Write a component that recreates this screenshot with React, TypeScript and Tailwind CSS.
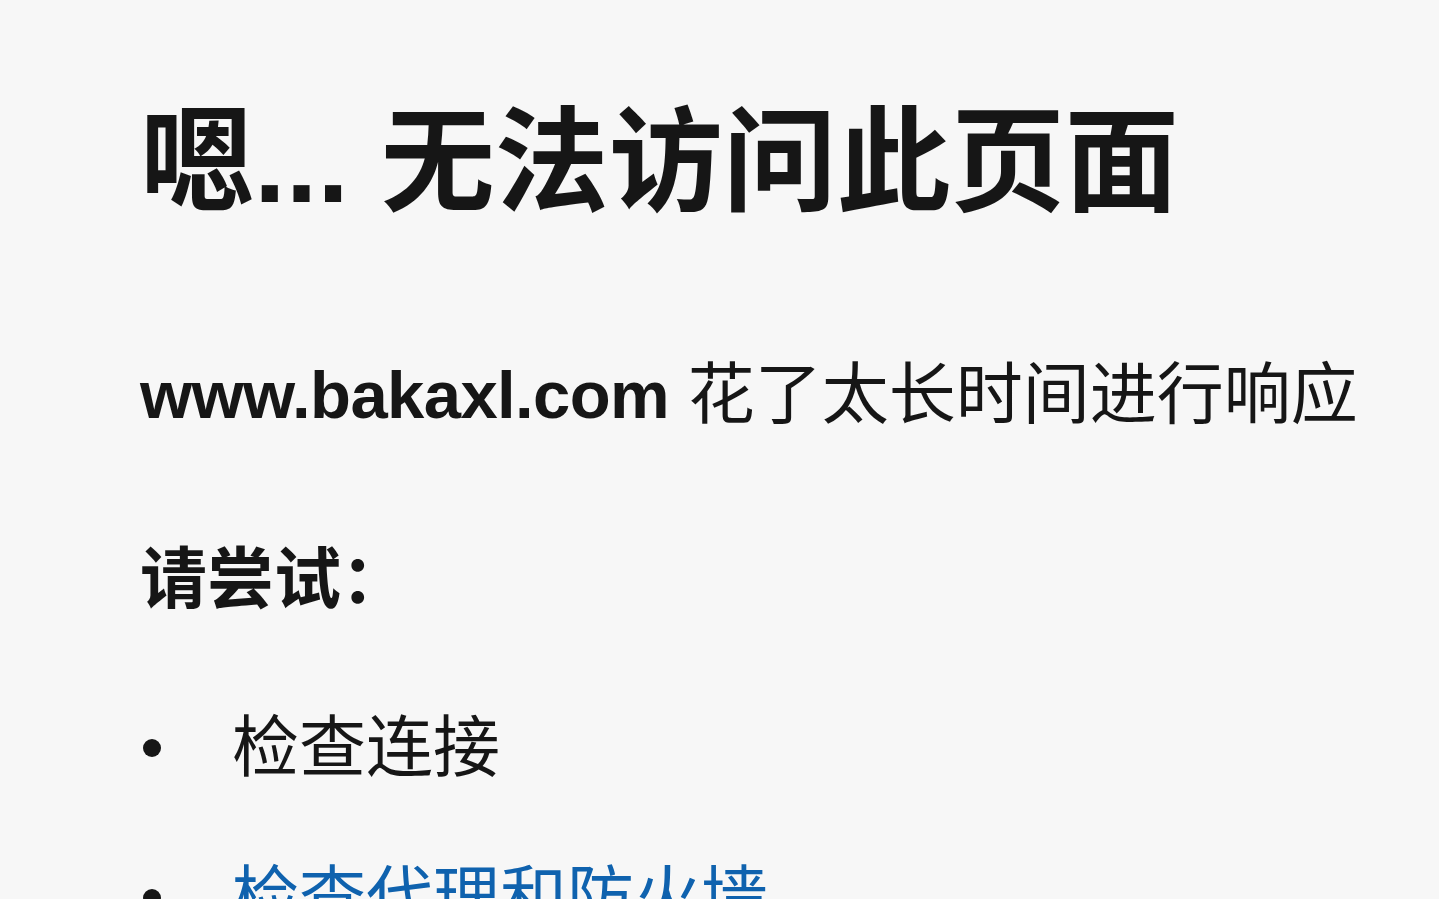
export default function App() {
  return (
    <div className="min-h-screen overflow-hidden bg-[#f7f7f7] pl-[140px] pt-[88px] text-[#161616] [font-family:'Liberation_Sans','Noto_Sans_CJK_SC',sans-serif]">
      <h1 className="whitespace-nowrap text-[114px] font-bold leading-[150px]">
        嗯... 无法访问此页面
      </h1>
      <p className="mt-[112px] whitespace-nowrap text-[67px] leading-[90px]">
        <span className="font-bold tracking-[-0.6px]">www.bakaxl.com</span> 花了太长时间进行响应
      </p>
      <p className="mt-[95px] text-[67px] font-bold leading-[90px]">请尝试：</p>
      <ul className="mt-[78px] text-[67px] leading-[90px]">
        <li className="flex items-center">
          <span className="ml-[3px] mr-[71px] h-[18px] w-[18px] rounded-full bg-[#161616]" />
          <span>检查连接</span>
        </li>
        <li className="mt-[60px] flex items-center">
          <span className="ml-[3px] mr-[71px] h-[18px] w-[18px] rounded-full bg-[#161616]" />
          <a href="#" className="text-[#0f62ae]">检查代理和防火墙</a>
        </li>
      </ul>
    </div>
  );
}
